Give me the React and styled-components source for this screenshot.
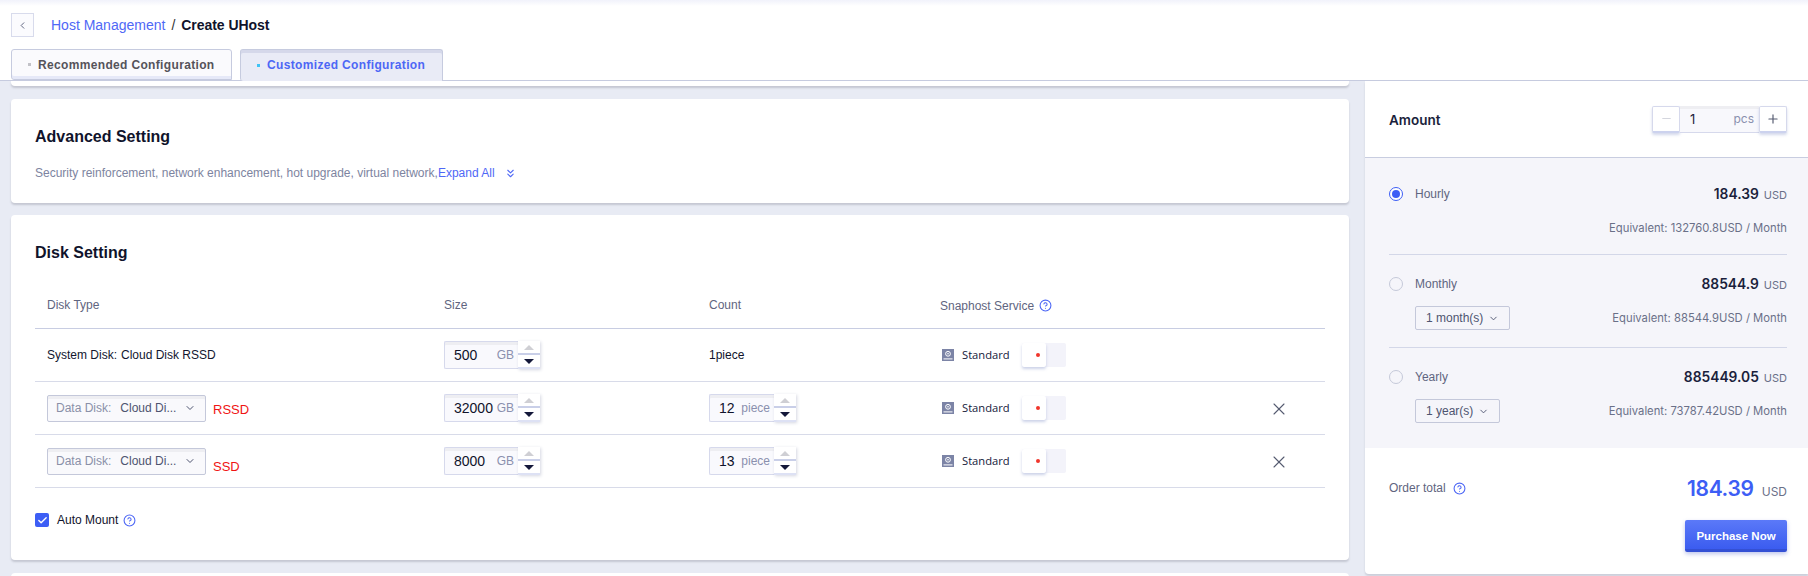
import React from 'react';
import styled, { createGlobalStyle } from 'styled-components';
import { Check, ChevronDown, ChevronLeft, ChevronsDown, CircleHelp, Minus, Plus, X } from 'lucide-react';

const Global = createGlobalStyle`
  html, body { margin: 0; padding: 0; height: 100%; overflow: hidden; }
  body { font-family: "Liberation Sans", Arial, sans-serif; color: #12162f; }
  * { box-sizing: border-box; }
`;

const Page = styled.div`
  width: 1808px;
  height: 576px;
  overflow: hidden;
  background: #e8ebf4;
  display: flex;
  flex-direction: column;
`;

const Header = styled.header`
  height: 81px;
  flex: none;
  background: linear-gradient(#f1f2fb, #fff 6px);
  border-bottom: 1px solid #c6cbdf;
  padding: 13px 0 0 11px;
  display: flex;
  flex-direction: column;
`;

const Crumbs = styled.div`
  display: flex;
  align-items: center;
  height: 24px;
  font-size: 14px;
`;

const BackButton = styled.div`
  width: 23px;
  height: 24px;
  border: 1px solid #d8dbec;
  background: #fbfbfe;
  display: flex;
  align-items: center;
  justify-content: center;
  color: #555b78;
  margin-right: 17px;
`;

const CrumbLink = styled.span`
  color: #4f68f6;
`;

const CrumbSep = styled.span`
  margin: 0 6px;
  color: #333;
`;

const CrumbCurrent = styled.span`
  font-weight: 700;
  letter-spacing: -0.05px;
  color: #10132b;
`;

const Tabs = styled.div`
  display: flex;
  gap: 8px;
  margin-top: 12px;
  height: 32px;
`;

const Tab = styled.div`
  height: ${p => (p.$active ? '32px' : '31px')};
  width: ${p => (p.$active ? '203px' : '221px')};
  border: 1px solid #c6cbdf;
  border-bottom: ${p => (p.$active ? 'none' : '1px solid #c6cbdf')};
  border-radius: 3px 3px 0 3px;
  background: ${p => (p.$active ? '#e9ebf6' : '#fafafd')};
  box-shadow: ${p => (p.$active ? 'inset 0 3px 0 #d5d8ea' : 'inset 0 -3px 0 #e6e9f8')};
  color: ${p => (p.$active ? '#4d67f5' : '#55535a')};
  font-size: 12px;
  font-weight: 700;
  letter-spacing: 0.34px;
  display: flex;
  align-items: center;
  padding-left: 16px;
  padding-bottom: ${p => (p.$active ? '1px' : '0')};
  position: relative;
  z-index: 1;
`;

const TabDot = styled.i`
  width: 3px;
  height: 3px;
  margin-right: 7px;
  background: ${p => (p.$active ? '#3fc3f5' : '#c2c2c8')};
`;

const Body = styled.div`
  flex: 1;
  display: flex;
  min-height: 0;
`;

const Main = styled.div`
  width: 1365px;
  flex: none;
  padding: 0 16px 0 11px;
  display: flex;
  flex-direction: column;
`;

const Card = styled.section`
  flex: none;
  background: #fff;
  border-radius: 4px;
  box-shadow: 0 2px 2px rgba(120, 125, 140, 0.32);
`;

const TopStub = styled(Card)`
  height: 5px;
  margin-bottom: 13px;
  border-radius: 0 0 4px 4px;
`;

const AdvancedCard = styled(Card)`
  height: 104px;
  margin-bottom: 12px;
  padding: 27px 24px 0;
`;

const DiskCard = styled(Card)`
  height: 345px;
  margin-bottom: 13px;
  padding: 27px 24px 0;
`;

const NextCard = styled(Card)`
  height: 20px;
`;

const CardTitle = styled.h2`
  margin: 0;
  font-size: 16px;
  line-height: 22px;
  font-weight: 700;
  color: #10132b;
`;

const Description = styled.div`
  margin-top: 15px;
  display: flex;
  align-items: center;
  font-size: 12px;
  line-height: 20px;
  color: #7d84a0;
`;

const Link = styled.span`
  color: #4f68f6;
`;

const ExpandIcon = styled(ChevronsDown)`
  margin-left: 9px;
  color: #4f68f6;
`;

const TableRow = styled.div`
  display: grid;
  grid-template-columns: 397px 265px 231px 1fr 60px;
  align-items: center;
  padding-left: 12px;
  height: ${p => (p.$head ? '65px' : '53px')};
  border-bottom: 1px solid ${p => (p.$head ? '#c8cde2' : '#d8dbe9')};
  font-size: 12px;
`;

const HeadCell = styled.div`
  display: flex;
  align-items: center;
  gap: 5px;
  color: #5f6580;
  padding-top: ${p => (p.$snap ? '19px' : '17px')};
`;

const HelpIcon = styled(CircleHelp)`
  color: #4d67f5;
  flex: none;
`;

const Cell = styled.div`
  display: flex;
  align-items: center;
`;

const SystemLabel = styled.span`
  margin-right: 4px;
`;

const Select = styled.div`
  width: ${p => p.$width};
  height: ${p => p.$height};
  border: 1px solid #c4c8da;
  border-radius: 2px;
  background: ${p => p.$tinted ? '#f9f9fc' : 'transparent'};
  box-shadow: ${p => p.$tinted ? 'inset 0 3px 0 #eeeef2' : 'none'};
  display: flex;
  align-items: center;
  padding: 0 ${p => p.$tinted ? '9px' : '10px'} 0 ${p => p.$tinted ? '8px' : '10px'};
  font-family: "Liberation Sans", sans-serif;
  font-size: 12px;
  white-space: nowrap;
  color: #4e5470;
`;

const SelectLabel = styled.span`
  color: #8a90a8;
  margin-right: 9px;
`;

const SelectValue = styled.span`
  flex: 1;
`;

const DiskTag = styled.span`
  margin-left: 7px;
  font-size: 13px;
  color: #f01414;
  position: relative;
  top: ${p => p.$drop}px;
`;

const NumberBox = styled.div`
  display: flex;
  height: 28px;
`;

const NumberField = styled.div`
  width: ${p => p.$width}px;
  border: 1px solid #d6d9ec;
  border-right: none;
  border-radius: 2px 0 0 2px;
  background: #f9f9fd;
  box-shadow: inset 0 3px 0 #eeeef2;
  display: flex;
  align-items: center;
  justify-content: space-between;
  padding: 0 4px 0 ${p => p.$pad}px;
  font-size: 14px;
  color: #10132b;
`;

const Unit = styled.span`
  font-size: 12px;
  color: #8a90ae;
`;

const Spin = styled.div`
  width: 22px;
  display: flex;
  flex-direction: column;
  background: #fff;
  box-shadow: 1px 1px 3px rgba(120, 125, 160, 0.3);
`;

const SpinHalf = styled.div`
  flex: 1;
  display: flex;
  align-items: center;
  justify-content: center;
  border-bottom: 2px solid ${p => (p.$down ? '#dde1f4' : '#c9cfe8')};
`;

const Arrow = styled.i`
  width: 0;
  height: 0;
  border-left: 5px solid transparent;
  border-right: 5px solid transparent;
  ${p => (p.$down ? 'border-top: 5px solid #14183a;' : 'border-bottom: 5px solid #cfcfd4;')}
`;

const PlainCount = styled.span`
  font-size: 12px;
  color: #10132b;
`;

const SnapWrap = styled.div`
  display: flex;
  align-items: center;
  padding-left: 2px;
`;

const SnapText = styled.span`
  margin: 0 12px 2px 8px;
  font-family: "Open Sans", sans-serif;
  font-size: 11.2px;
  color: #14183a;
`;

const Switch = styled.div`
  width: 44px;
  height: 24px;
  background: #f3f3fa;
  border-radius: 2px;
`;

const Knob = styled.div`
  width: 24px;
  height: 24px;
  background: #fff;
  border-radius: 2px;
  box-shadow: 0 2px 3px rgba(110, 125, 190, 0.35);
  display: flex;
  align-items: center;
  justify-content: center;
  padding-left: 8px;
`;

const KnobDot = styled.i`
  width: 4px;
  height: 4px;
  border-radius: 50%;
  background: #f0352b;
`;

const RemoveIcon = styled(X)`
  color: #555b70;
  margin: 2px 0 0 4px;
`;

const AutoMount = styled.div`
  margin-top: 25px;
  display: flex;
  align-items: center;
  font-size: 12px;
  color: #10132b;
`;

const CheckBox = styled.span`
  width: 14px;
  height: 14px;
  border-radius: 2px;
  background: #3d5ef5;
  color: #fff;
  display: flex;
  align-items: center;
  justify-content: center;
  margin-right: 8px;
`;

const AutoHelp = styled(HelpIcon)`
  margin-left: 5px;
`;

const Side = styled.aside`
  width: 443px;
  height: 493px;
  flex: none;
  background: #fff;
  border-radius: 0 0 0 4px;
  font-family: Inter, "Liberation Sans", sans-serif;
  display: flex;
  flex-direction: column;
  box-shadow: 0 2px 2px rgba(120, 125, 140, 0.25);
`;

const AmountBar = styled.div`
  height: 77px;
  flex: none;
  padding: 0 21px 0 24px;
  border-bottom: 1px solid #c8cde0;
  display: flex;
  align-items: center;
  justify-content: space-between;
`;

const AmountLabel = styled.span`
  padding-top: 2px;
  font-size: 13.5px;
  font-weight: 600;
  color: #1b1f3c;
`;

const Stepper = styled.div`
  display: flex;
  height: 27px;
`;

const StepButton = styled.div`
  width: 28px;
  background: #fff;
  border: 1px solid #d6d9ec;
  border-bottom: 2px solid #ccd2ee;
  border-radius: 2px;
  box-shadow: 0 2px 3px rgba(110, 125, 190, 0.3);
  color: ${p => (p.$disabled ? '#d4d6de' : '#555b70')};
  display: flex;
  align-items: center;
  justify-content: center;
`;

const StepField = styled.div`
  width: 79px;
  background: #f8f8fc;
  box-shadow: inset 0 3px 0 #eeeef2;
  border-bottom: 1px solid #d6d9ec;
  display: flex;
  align-items: center;
  justify-content: space-between;
  padding: 0 5px 0 10px;
  font-size: 13px;
  color: #1b1f3c;
`;

const StepUnit = styled.span`
  font-size: 12px;
  color: #8a90ae;
`;

const Plans = styled.div`
  height: 290px;
  flex: none;
  background: #f5f5fa;
  padding: 0 21px 0 24px;
  display: flex;
  flex-direction: column;
`;

const Plan = styled.div`
  height: ${p => p.$height}px;
  flex: none;
  border-bottom: ${p => (p.$last ? 'none' : '1px solid #d3d7e8')};
  padding-top: ${p => p.$top}px;
`;

const PlanLine = styled.div`
  display: flex;
  align-items: center;
  justify-content: space-between;
`;

const PlanSub = styled(PlanLine)`
  margin-top: ${p => p.$gap}px;
  justify-content: ${p => (p.$end ? 'flex-end' : 'space-between')};
  padding-left: 26px;
`;

const PlanName = styled.div`
  display: flex;
  align-items: center;
  font-family: "Liberation Sans", sans-serif;
  font-size: 12px;
  color: #5f6580;
`;

const Radio = styled.span`
  width: 14px;
  height: 14px;
  border-radius: 50%;
  margin-right: 12px;
  border: 1px solid ${p => (p.$on ? '#3d5ef5' : '#c5c9d9')};
  background: ${p => (p.$on ? '#fff' : 'transparent')};
  display: flex;
  align-items: center;
  justify-content: center;
`;

const RadioDot = styled.i`
  width: 8px;
  height: 8px;
  border-radius: 50%;
  background: #3d5ef5;
`;

const Price = styled.div`
  display: flex;
  align-items: baseline;
  font-size: 13.8px;
  font-weight: 600;
  color: #1b1f3c;
`;

const Currency = styled.span`
  margin-left: 5px;
  font-size: 11px;
  font-weight: 400;
  color: #6a7088;
`;

const Equivalent = styled.span`
  font-size: 11.25px;
  color: #6a7088;
`;

const Summary = styled.div`
  flex: 1;
  padding: 27px 21px 0 24px;
`;

const TotalLine = styled.div`
  display: flex;
  align-items: center;
  justify-content: space-between;
  height: 26px;
`;

const TotalLabel = styled.div`
  display: flex;
  align-items: center;
  gap: 7px;
  font-family: "Liberation Sans", sans-serif;
  font-size: 12px;
  color: #5f6580;
`;

const TotalPrice = styled.div`
  display: flex;
  align-items: baseline;
  font-size: 21px;
  font-weight: 600;
  letter-spacing: -0.3px;
  color: #3d5ef5;
`;

const TotalCurrency = styled(Currency)`
  margin-left: 8px;
  font-size: 12px;
  letter-spacing: 0;
`;

const ButtonRow = styled.div`
  margin-top: 19px;
  display: flex;
  justify-content: flex-end;
`;

const PurchaseButton = styled.div`
  width: 102px;
  height: 32px;
  border-radius: 2px;
  background: linear-gradient(#5b79f8, #3b5cf0);
  border-bottom: 3px solid #3450d4;
  box-shadow: 0 2px 4px rgba(70, 90, 200, 0.35);
  color: #fff;
  font-family: "Liberation Sans", sans-serif;
  font-size: 11.5px;
  font-weight: 700;
  display: flex;
  align-items: center;
  justify-content: center;
  padding-top: 2px;
`;

const SnapshotIcon = () => (
  <svg width="12" height="12" viewBox="0 0 12 12">
    <rect width="12" height="12" fill="#7c84a6" />
    <circle cx="6" cy="4.8" r="2.4" fill="none" stroke="#fff" strokeWidth="1" />
    <circle cx="6" cy="4.8" r="0.8" fill="#fff" />
    <rect x="1.5" y="9.4" width="9" height="1" fill="#fff" />
  </svg>
);

const NumberInput = ({ value, unit, width, pad }) => (
  <NumberBox>
    <NumberField $width={width} $pad={pad}>
      <span>{value}</span>
      <Unit>{unit}</Unit>
    </NumberField>
    <Spin>
      <SpinHalf><Arrow /></SpinHalf>
      <SpinHalf $down><Arrow $down /></SpinHalf>
    </Spin>
  </NumberBox>
);

const Snapshot = () => (
  <SnapWrap>
    <SnapshotIcon />
    <SnapText>Standard</SnapText>
    <Switch><Knob><KnobDot /></Knob></Switch>
  </SnapWrap>
);

const dataDisks = [
  { tag: 'RSSD', drop: 1, size: '32000', count: '12' },
  { tag: 'SSD', drop: 5, size: '8000', count: '13' },
];

const App = () => {
  return (
    <Page>
      <Global />
      <Header>
        <Crumbs>
          <BackButton><ChevronLeft size={11} /></BackButton>
          <CrumbLink>Host Management</CrumbLink>
          <CrumbSep>/</CrumbSep>
          <CrumbCurrent>Create UHost</CrumbCurrent>
        </Crumbs>
        <Tabs>
          <Tab><TabDot />Recommended Configuration</Tab>
          <Tab $active><TabDot $active />Customized Configuration</Tab>
        </Tabs>
      </Header>
      <Body>
        <Main>
          <TopStub />
          <AdvancedCard>
            <CardTitle>Advanced Setting</CardTitle>
            <Description>
              Security reinforcement, network enhancement, hot upgrade, virtual network,
              <Link>Expand All</Link>
              <ExpandIcon size={13} />
            </Description>
          </AdvancedCard>
          <DiskCard>
            <CardTitle>Disk Setting</CardTitle>
            <TableRow $head>
              <HeadCell>Disk Type</HeadCell>
              <HeadCell>Size</HeadCell>
              <HeadCell>Count</HeadCell>
              <HeadCell $snap>Snaphost Service <HelpIcon size={13} /></HeadCell>
            </TableRow>
            <TableRow>
              <Cell><SystemLabel>System Disk:</SystemLabel> Cloud Disk RSSD</Cell>
              <Cell><NumberInput value="500" unit="GB" width={74} pad={9} /></Cell>
              <Cell><PlainCount>1piece</PlainCount></Cell>
              <Snapshot />
            </TableRow>
            {dataDisks.map(disk => (
              <TableRow key={disk.tag}>
                <Cell>
                  <Select $width="159px" $height="27px" $tinted>
                    <SelectLabel>Data Disk:</SelectLabel>
                    <SelectValue>Cloud Di...</SelectValue>
                    <ChevronDown size={12} />
                  </Select>
                  <DiskTag $drop={disk.drop}>{disk.tag}</DiskTag>
                </Cell>
                <Cell><NumberInput value={disk.size} unit="GB" width={74} pad={9} /></Cell>
                <Cell><NumberInput value={disk.count} unit="piece" width={65} pad={9} /></Cell>
                <Snapshot />
                <Cell><RemoveIcon size={20} strokeWidth={1.3} /></Cell>
              </TableRow>
            ))}
            <AutoMount>
              <CheckBox><Check size={11} strokeWidth={3} /></CheckBox>
              Auto Mount
              <AutoHelp size={13} />
            </AutoMount>
          </DiskCard>
          <NextCard />
        </Main>
        <Side>
          <AmountBar>
            <AmountLabel>Amount</AmountLabel>
            <Stepper>
              <StepButton $disabled><Minus size={13} /></StepButton>
              <StepField>1<StepUnit>pcs</StepUnit></StepField>
              <StepButton><Plus size={14} /></StepButton>
            </Stepper>
          </AmountBar>
          <Plans>
            <Plan $height={97} $top={28}>
              <PlanLine>
                <PlanName><Radio $on><RadioDot /></Radio>Hourly</PlanName>
                <Price>184.39<Currency>USD</Currency></Price>
              </PlanLine>
              <PlanSub $end $gap={19}>
                <Equivalent>Equivalent: 132760.8USD / Month</Equivalent>
              </PlanSub>
            </Plan>
            <Plan $height={93} $top={21}>
              <PlanLine>
                <PlanName><Radio />Monthly</PlanName>
                <Price>88544.9<Currency>USD</Currency></Price>
              </PlanLine>
              <PlanSub $gap={14}>
                <Select $width="95px" $height="24px"><SelectValue>1 month(s)</SelectValue><ChevronDown size={11} /></Select>
                <Equivalent>Equivalent: 88544.9USD / Month</Equivalent>
              </PlanSub>
            </Plan>
            <Plan $height={100} $top={21} $last>
              <PlanLine>
                <PlanName><Radio />Yearly</PlanName>
                <Price>885449.05<Currency>USD</Currency></Price>
              </PlanLine>
              <PlanSub $gap={14}>
                <Select $width="85px" $height="24px"><SelectValue>1 year(s)</SelectValue><ChevronDown size={11} /></Select>
                <Equivalent>Equivalent: 73787.42USD / Month</Equivalent>
              </PlanSub>
            </Plan>
          </Plans>
          <Summary>
            <TotalLine>
              <TotalLabel>Order total <HelpIcon size={13} /></TotalLabel>
              <TotalPrice>184.39<TotalCurrency>USD</TotalCurrency></TotalPrice>
            </TotalLine>
            <ButtonRow><PurchaseButton>Purchase Now</PurchaseButton></ButtonRow>
          </Summary>
        </Side>
      </Body>
    </Page>
  );
};

export default App;
